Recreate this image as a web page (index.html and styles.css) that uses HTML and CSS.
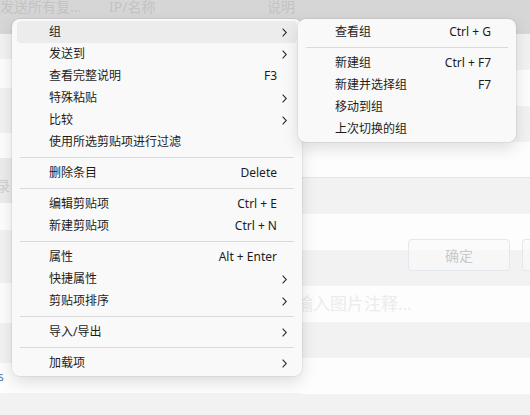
FILE: index.html
```html
<!DOCTYPE html>
<html lang="zh-CN">
<head>
<meta charset="utf-8">
<title>Menu</title>
<link rel="stylesheet" href="styles.css">
</head>
<body>
<div class="app">
  <div class="header">
    <span class="hcol hcol-1">发送所有复...</span>
    <span class="hcol hcol-2">IP/名称</span>
    <span class="hcol hcol-3">说明</span>
  </div>
  <div class="panes">
    <div class="pane-left">
      <div class="band g" style="height:25px"></div>
      <div class="band w" style="height:29px"></div>
      <div class="band g" style="height:45px"></div>
      <div class="band w" style="height:25px"></div>
      <div class="band g2" style="height:45px"><span class="ghost-char">录</span></div>
      <div class="band w" style="height:27px"></div>
      <div class="band g" style="height:53px"></div>
      <div class="band w" style="height:40px"></div>
      <div class="band g" style="height:40px"></div>
      <div class="band w" style="height:30px"><span class="blue-char">s</span></div>
    </div>
    <div class="pane-right">
      <div class="band g" style="height:36px"></div>
      <div class="band w" style="height:36px"></div>
      <div class="band g" style="height:36px"></div>
      <div class="band w line-band" style="height:36px"></div>
      <div class="band g" style="height:36px"></div>
      <div class="band w" style="height:36px"></div>
      <div class="band g" style="height:36px"></div>
      <div class="band w" style="height:36px"><span class="placeholder">输入图片注释...</span></div>
      <div class="band g" style="height:36px"></div>
      <div class="band w" style="height:36px"></div>
    </div>
  </div>
  <div class="band g bottom"></div>
  <div class="btn btn-ok">确定</div>
  <div class="btn btn-2"></div>
</div>

<div class="menu main-menu">
  <div class="item hover"><span class="label">组</span><span class="key"></span><span class="arrow"><svg width="5" height="9" viewBox="0 0 5 9"><path d="M0.6 0.6 L4.3 4.5 L0.6 8.4" fill="none" stroke="#2b2b2b" stroke-width="1.1"/></svg></span></div>
  <div class="item"><span class="label">发送到</span><span class="key"></span><span class="arrow"><svg width="5" height="9" viewBox="0 0 5 9"><path d="M0.6 0.6 L4.3 4.5 L0.6 8.4" fill="none" stroke="#2b2b2b" stroke-width="1.1"/></svg></span></div>
  <div class="item"><span class="label">查看完整说明</span><span class="key">F3</span><span class="arrow"></span></div>
  <div class="item"><span class="label">特殊粘贴</span><span class="key"></span><span class="arrow"><svg width="5" height="9" viewBox="0 0 5 9"><path d="M0.6 0.6 L4.3 4.5 L0.6 8.4" fill="none" stroke="#2b2b2b" stroke-width="1.1"/></svg></span></div>
  <div class="item"><span class="label">比较</span><span class="key"></span><span class="arrow"><svg width="5" height="9" viewBox="0 0 5 9"><path d="M0.6 0.6 L4.3 4.5 L0.6 8.4" fill="none" stroke="#2b2b2b" stroke-width="1.1"/></svg></span></div>
  <div class="item"><span class="label">使用所选剪贴项进行过滤</span><span class="key"></span><span class="arrow"></span></div>
  <div class="sep"></div>
  <div class="item"><span class="label">删除条目</span><span class="key">Delete</span><span class="arrow"></span></div>
  <div class="sep"></div>
  <div class="item"><span class="label">编辑剪贴项</span><span class="key">Ctrl + E</span><span class="arrow"></span></div>
  <div class="item"><span class="label">新建剪贴项</span><span class="key">Ctrl + N</span><span class="arrow"></span></div>
  <div class="sep"></div>
  <div class="item"><span class="label">属性</span><span class="key">Alt + Enter</span><span class="arrow"></span></div>
  <div class="item"><span class="label">快捷属性</span><span class="key"></span><span class="arrow"><svg width="5" height="9" viewBox="0 0 5 9"><path d="M0.6 0.6 L4.3 4.5 L0.6 8.4" fill="none" stroke="#2b2b2b" stroke-width="1.1"/></svg></span></div>
  <div class="item"><span class="label">剪贴项排序</span><span class="key"></span><span class="arrow"><svg width="5" height="9" viewBox="0 0 5 9"><path d="M0.6 0.6 L4.3 4.5 L0.6 8.4" fill="none" stroke="#2b2b2b" stroke-width="1.1"/></svg></span></div>
  <div class="sep"></div>
  <div class="item"><span class="label">导入/导出</span><span class="key"></span><span class="arrow"><svg width="5" height="9" viewBox="0 0 5 9"><path d="M0.6 0.6 L4.3 4.5 L0.6 8.4" fill="none" stroke="#2b2b2b" stroke-width="1.1"/></svg></span></div>
  <div class="sep"></div>
  <div class="item"><span class="label">加载项</span><span class="key"></span><span class="arrow"><svg width="5" height="9" viewBox="0 0 5 9"><path d="M0.6 0.6 L4.3 4.5 L0.6 8.4" fill="none" stroke="#2b2b2b" stroke-width="1.1"/></svg></span></div>
</div>

<div class="menu sub-menu">
  <div class="item"><span class="label">查看组</span><span class="key">Ctrl + G</span><span class="arrow"></span></div>
  <div class="sep"></div>
  <div class="item"><span class="label">新建组</span><span class="key">Ctrl + F7</span><span class="arrow"></span></div>
  <div class="item"><span class="label">新建并选择组</span><span class="key">F7</span><span class="arrow"></span></div>
  <div class="item"><span class="label">移动到组</span><span class="key"></span><span class="arrow"></span></div>
  <div class="item"><span class="label">上次切换的组</span><span class="key"></span><span class="arrow"></span></div>
</div>
</body>
</html>
```

FILE: styles.css
```css
* { box-sizing: border-box; }
html, body {
  margin: 0;
  padding: 0;
  width: 530px;
  height: 415px;
  overflow: hidden;
  background: #f3f3f3;
  font-family: "Noto Sans", "Noto Sans CJK SC", sans-serif;
}
.app {
  position: relative;
  width: 530px;
  height: 415px;
  overflow: hidden;
}
.header {
  height: 34px;
  background: #d6d6d6;
  position: relative;
  display: flex;
  align-items: flex-start;
  font-size: 14px;
  line-height: 14px;
  color: #c3c3c3;
  overflow: hidden;
}
.hcol { white-space: nowrap; margin-top: 0; }
.hcol-1 { margin-left: 0; width: 109px; }
.hcol-2 { width: 158px; }
.panes {
  display: grid;
  grid-template-columns: 300px 1fr;
}
.pane-left, .pane-right {
  display: flex;
  flex-direction: column;
}
.band { position: relative; overflow: hidden; }
.band.g { background: #f2f2f2; }
.band.g2 { background: #ececec; }
.band.w { background: #fdfdfd; }
.line-band { border-bottom: 1px solid #e6e6e6; }
.bottom { height: 40px; }
.ghost-char {
  font-size: 14px;
  color: #cfcfcf;
  position: absolute;
  left: -4px;
  top: 17px;
}
.blue-char {
  font-size: 12px;
  color: #5a7fb5;
  position: absolute;
  left: -2px;
  top: 5px;
}
.placeholder {
  position: absolute;
  left: -4px;
  top: 4px;
  font-size: 17px;
  color: #ececec;
  white-space: nowrap;
}
.btn {
  position: absolute;
  top: 239px;
  height: 32px;
  border: 1px solid #e3e8ee;
  border-radius: 4px;
  background: rgba(250, 250, 250, 0.6);
  display: flex;
  align-items: center;
  justify-content: center;
  font-size: 14px;
  color: #c9c9c9;
}
.btn-ok { left: 408px; width: 102px; }
.btn-2 { left: 522px; width: 8px; border-right: none; border-radius: 4px 0 0 4px; }

.menu {
  position: absolute;
  background: #f9f9f9;
  border-radius: 8px;
  padding: 2px 0;
  box-shadow: 0 0 0 1px rgba(0, 0, 0, 0.05), 0 6px 16px rgba(0, 0, 0, 0.13);
  font-size: 12px;
  color: #1c1c1c;
}
.main-menu {
  left: 12px;
  top: 19px;
  width: 290px;
}
.sub-menu {
  left: 298px;
  top: 19px;
  width: 218px;
}
.item {
  height: 22px;
  margin: 0 5px;
  padding-left: 32px;
  border-radius: 4px;
  display: grid;
  grid-template-columns: 1fr auto 20px;
  align-items: center;
  white-space: nowrap;
  line-height: 22px;
}
.item.hover { background: #ececec; }
.key { text-align: right; }
.arrow {
  display: flex;
  align-items: center;
  padding-left: 5px;
  height: 22px;
}
.arrow svg { display: block; }
.sep {
  height: 9px;
  padding: 4px 8px;
}
.sep::before {
  content: "";
  display: block;
  height: 1px;
  background: #dadada;
}
```
